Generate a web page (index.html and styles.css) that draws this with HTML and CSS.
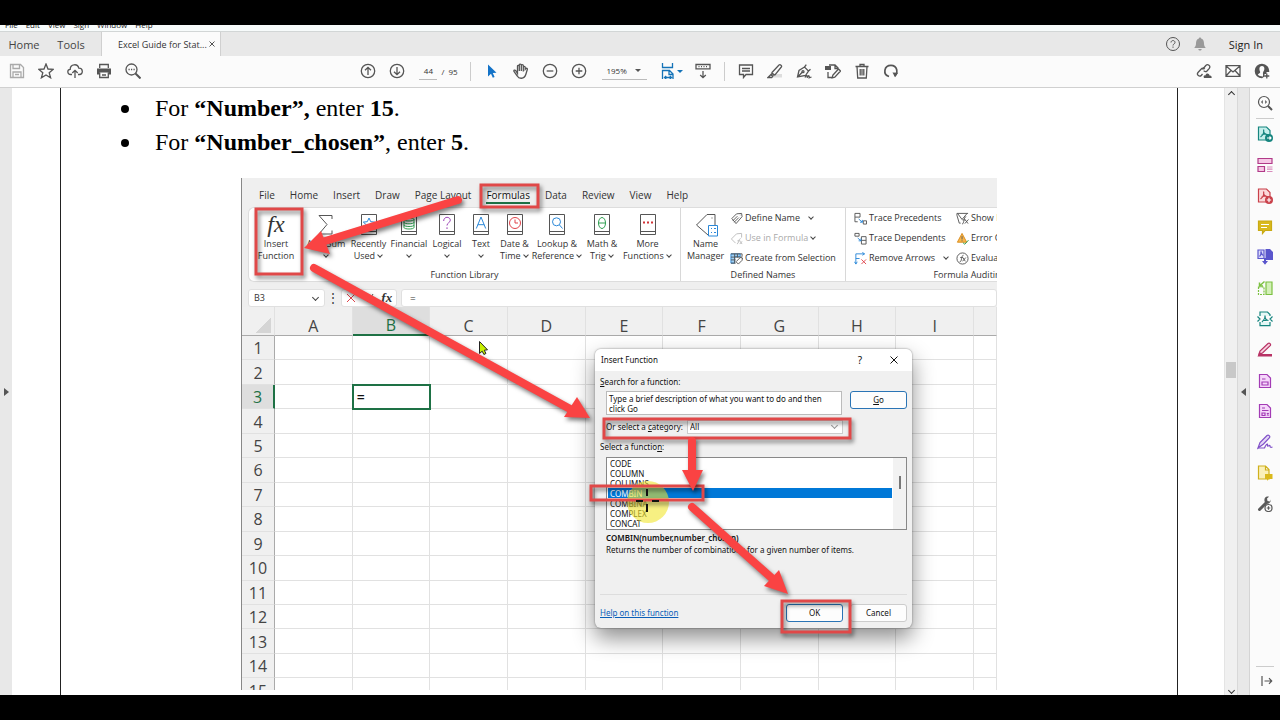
FILE: index.html
```html
<!DOCTYPE html>
<html lang="en">
  <head>
    <meta charset="UTF-8" />
    <meta name="viewport" content="width=device-width, initial-scale=1.0" />
    <title>Excel Guide for Stat...</title>
    <link rel="stylesheet" href="styles.css">
  </head>
  <body>
    <div class="app">
      <nav class="menubar">
        <a href="#">File</a>
        <a href="#">Edit</a>
        <a href="#">View</a>
        <a href="#">Sign</a>
        <a href="#">Window</a>
        <a href="#">Help</a>
      </nav>

      <div class="tabs">
        <button class="tab">Home</button>
        <button class="tab">Tools</button>
        <div class="tab-open">
          <span>Excel Guide for Stat...</span>
          <button class="close" aria-label="Close tab">
            <svg width="6" height="6" viewBox="0 0 6 6"><path d="M.5 .5l5 5M5.500 .5l-5 5" /></svg>
          </button>
        </div>
        <div class="account">
          <button aria-label="Help">
            <svg width="16" height="16" viewBox="0 0 16 16"><circle cx="8" cy="8" r="6.500" /><path d="M6 6.500c0-2.600 4-2.600 4 0 0 1.500-2 1.400-2 3M8 10.500v1.300" /></svg>
          </button>
          <button aria-label="Notifications">
            <svg width="16" height="16" viewBox="0 0 16 16"><path class="bell" d="M8 1.500c.8 0 1.100.5 1.100 1.100C11.500 3.300 12 5.500 12 7.500c0 2 .6 3 1.800 4.500H2.200C3.400 10.500 4 9.500 4 7.500c0-2 .5-4.200 2.900-4.900 0-.6.300-1.100 1.100-1.100zM6.300 13h3.400c-.2 2-3.200 2-3.400 0z" /></svg>
          </button>
          <button class="signin">Sign In</button>
        </div>
      </div>

      <div class="toolbar">
        <div class="tools tools-left">
          <button class="tool pale" aria-label="Save"><svg viewBox="0 0 16 16"><path d="M1.500 1.500h10l3 3v10h-13zM4 1.500v4h6.500v-4M4 14.500V9h8v5.500M6 11.500h4" /></svg></button>
          <button class="tool" aria-label="Star"><svg viewBox="0 0 16 16"><path d="M8 1l2 5 5.300.3-4.100 3.400 1.400 5.100L8 12l-4.600 2.800 1.400-5.100L.7 6.300 6 6z" /></svg></button>
          <button class="tool" aria-label="Upload"><svg viewBox="0 0 16 16"><path d="M5 11.500H3.700C0 11.500-.1 6.500 3.200 6.300 3.200.8 10.800.2 11.800 5.200c4.500-.2 4.600 6.300.7 6.300H11M8 15V7.500M5.300 10L8 7.300l2.700 2.700" /></svg></button>
          <button class="tool" aria-label="Print"><svg viewBox="0 0 16 16"><path d="M3.700 5V1.500h8.600V5M3.700 9.500v5h8.600v-5M6 12h4" /><path class="solid" d="M1 5.500h14v6h-2.500v-2h-9v2H1z" /></svg></button>
          <button class="tool" aria-label="Find text"><svg viewBox="0 0 16 16"><circle cx="6.500" cy="6.500" r="5.500" /><path d="M10.500 10.500l5 5" stroke-width="2" /><path d="M3.500 6.500h1.200M6 6.500h1.200M8.500 6.500h1.200" /></svg></button>
        </div>

        <div class="tools">
          <button class="tool" aria-label="Previous page"><svg viewBox="0 0 16 16"><circle cx="8" cy="8" r="6.700" /><path d="M8 12V4.500M5 7.300l3-3 3 3" /></svg></button>
          <button class="tool" aria-label="Next page"><svg viewBox="0 0 16 16"><circle cx="8" cy="8" r="6.700" /><path d="M8 4v7.500M5 8.700l3 3 3-3" /></svg></button>
          <input class="page-no" aria-label="Page" value="44">
          <span class="page-total">/&nbsp; 95</span>
          <span class="divider"></span>
          <button class="tool blue" aria-label="Select"><svg viewBox="0 0 16 16"><path class="solid" d="M4 1.500v12l3-2.800 1.800 4 1.800-.8-1.800-3.800 3.700-.3z" /></svg></button>
          <button class="tool" aria-label="Pan"><svg viewBox="0 0 16 16"><path d="M4.500 10.500V3.300c0-1.300 1.800-1.300 1.800 0V8 2c0-1.300 2-1.300 2 0v6-5.500c0-1.300 2-1.300 2 0V8.500 4.300c0-1.200 1.900-1.200 1.900 0v2l.5-.7c.7-.8 1.900-.1 1.600.9l-1.500 5c-1.500 5-7 4.500-8.500 1.500L1 8.500c-.5-1.300.8-1.900 1.600-1z" /></svg></button>
          <button class="tool" aria-label="Zoom out"><svg viewBox="0 0 16 16"><circle cx="8" cy="8" r="6.700" /><path d="M4.700 8h6.600" /></svg></button>
          <button class="tool" aria-label="Zoom in"><svg viewBox="0 0 16 16"><circle cx="8" cy="8" r="6.700" /><path d="M4.700 8h6.600M8 4.700v6.600" /></svg></button>
          <button class="zoom-level"><span>195%</span><i class="caret"></i></button>
          <button class="tool fit blue" aria-label="Fit width"><svg viewBox="0 0 16 16"><path d="M2.500 0v4.500h10V0M2.500 16V7.500h7l3.500 3.500v5M9 7.500v4h4M5 14.500h6M6.200 13L4.500 14.500 6.200 16M9.800 13l1.700 1.500L9.800 16" /></svg><i class="caret"></i></button>
          <button class="tool" aria-label="Scroll mode"><svg viewBox="0 0 16 16"><path d="M1 1.500h14v4.300H1zM3.500 3.700h1M6 3.700h1M8.500 3.700h1M11 3.700h1M8 8v6.500M5.200 12L8 14.700l2.800-2.700" /></svg></button>
          <span class="divider"></span>
          <button class="tool" aria-label="Comment"><svg viewBox="0 0 16 16"><path d="M1.500 2h13v9.500h-6.500L5.500 14.500v-3h-4zM4 5.500h8M4 8h8" /></svg></button>
          <button class="tool" aria-label="Highlight"><svg viewBox="0 0 16 16"><path class="tint" d="M6 11h9v3.500H4z" /><path d="M5 9.500L12 2c1.200-1 3.300.7 2.300 2L8 11.800l-3.300.5zM4.800 10l3 2M1 14.500l3-3 1.700 1.700-1 1.300z" /></svg></button>
          <button class="tool" aria-label="Sign"><svg viewBox="0 0 16 16"><path d="M1.500 14L3 7.500 8.500 4l4 4-3 4.500zM8.500 4l1.800-2.300M12.500 8l2-1.800M1.500 14L6.500 9M9 14.500c2-4 2.500-1 2.200.3 1.500-3.500 2.300-1.800 2 0l2.300-.8" /><circle cx="7" cy="8.700" r="1" /></svg></button>
          <button class="tool" aria-label="Edit PDF"><svg viewBox="0 0 16 16"><path class="solid" d="M0 3h6v4H0z" /><path d="M4 2h6l3.300 3.300M10 2v3.500h3.500M3 9v5.500h4M7.800 12.200L13.500 6l2 2-5.700 6.200-2.600.6z" /></svg></button>
          <button class="tool" aria-label="Delete"><svg viewBox="0 0 16 16"><path d="M1.500 3.500h13M6 3.300V1.500h4v1.800M3 3.500l.7 11.500h8.600L13 3.500M6.200 6v6.500M8 6v6.500M9.800 6v6.500" /></svg></button>
          <button class="tool" aria-label="Rotate"><svg viewBox="0 0 16 16"><path d="M6 13.500C-.5 11.500 1 2.300 8 2.300c6.500 0 7.300 7.700 3.700 10.700" stroke-width="1.700" /><path class="solid" d="M9.500 9.500l5.700.2-3.200 4.500z" /></svg></button>
        </div>

        <div class="tools tools-right">
          <button class="tool" aria-label="Share link"><svg viewBox="0 0 16 16"><path d="M6.500 6.500l3.300-4c2-2 5.200.3 3.500 2.800L11 8c-1 1-2.500.8-3.300-.3M8.800 6c-1-1.200-2.800-1-3.600 0L2 9.500c-1.800 2.300 1.500 5 3.500 2.700l1-1.200" /><path class="solid" d="M8 15c-1.200-2 .5-3 1.500-2.500.5-2.700 3.500-2.500 4 0 2-.2 2.500 1.500 2 2.500z" /></svg></button>
          <button class="tool" aria-label="Mail"><svg viewBox="0 0 16 16"><path d="M1 2.700h14v10.600H1zM1 3l7 6 7-6M1 13l5-5.500M15 13l-5-5.500" /></svg></button>
          <button class="tool" aria-label="Add person"><svg viewBox="0 0 16 16"><path class="solid" fill-rule="evenodd" d="M8 .7a7.300 7.300 0 0 1 7.200 8.300h-2.700v2h-2v2.500L8 15.300A7.300 7.300 0 0 1 8 .7zM8 3C5 3 5 6.500 6 8.500c.4 1 0 1.700-1 2L3.800 11.500C5 13 7 13.500 9 13.400v-2.900c-.5-.5.8-2.500 1.200-3.500C10.700 4.500 10 3 8 3z" /><path d="M12.800 10.500v5M10.300 13h5" /></svg></button>
        </div>
      </div>

      <div class="workspace">
        <button class="gutter" aria-label="Show navigation pane"><i class="tri-right"></i></button>

        <main class="page">
          <div class="sheet-frame">
            <ul class="steps">
              <li>For <b>“Number”,</b> enter <b>15</b>.</li>
              <li>For <b>“Number_chosen”</b>, enter <b>5</b>.</li>
            </ul>

            <div class="excel">
              <nav class="ribbon-tabs">
                <a href="#">File</a>
                <a href="#">Home</a>
                <a href="#">Insert</a>
                <a href="#">Draw</a>
                <a href="#">Page Layout</a>
                <a href="#" class="current">Formulas</a>
                <a href="#">Data</a>
                <a href="#">Review</a>
                <a href="#">View</a>
                <a href="#">Help</a>
              </nav>

              <div class="ribbon">
                <section class="group library">
                  <div class="buttons">
                    <button class="big"><span class="fx">fx</span>Insert<br>Function</button>
                    <button class="big"><svg viewBox="0 0 24 24"><path d="M18 6V2.500H5l8 9L5 21h13v-3.500" /></svg>AutoSum<br><i class="chev"></i></button>
                    <button class="big"><svg viewBox="0 0 24 24"><path d="M4.500 1.500h15v20h-15zM4.500 18.500h15" /><path class="c-blue" d="M12 5l1.700 3.700 4 .4-3 2.700.9 4-3.600-2.100-3.600 2.100.9-4-3-2.700 4-.4z" /></svg>Recently<br>Used <i class="chev"></i></button>
                    <button class="big"><svg viewBox="0 0 24 24"><path d="M4.500 1.500h15v20h-15zM4.500 18.500h15" /><path class="c-green" d="M7 6.500c0-2 10-2 10 0v8c0 2-10 2-10 0zM7 6.500c0 2 10 2 10 0M7 9.300c0 2 10 2 10 0M7 12c0 2 10 2 10 0" /></svg>Financial<br><i class="chev"></i></button>
                    <button class="big"><svg viewBox="0 0 24 24"><path d="M4.500 1.500h15v20h-15zM4.500 18.500h15" /><path class="c-purple" d="M8.700 8c0-5 6.600-4.500 6.600-.8 0 2.500-3.300 2.500-3.300 5.300M12 14.300v1.700" /></svg>Logical<br><i class="chev"></i></button>
                    <button class="big"><svg viewBox="0 0 24 24"><path d="M4.500 1.500h15v20h-15zM4.500 18.500h15" /><path class="c-blue" d="M7.300 15.500L12 4l4.700 11.500M8.800 11.700h6.400" /></svg>Text<br><i class="chev"></i></button>
                    <button class="big"><svg viewBox="0 0 24 24"><path d="M4.500 1.500h15v20h-15zM4.500 18.500h15" /><circle class="c-red" cx="12" cy="10" r="5.500" /><path class="c-red" d="M12 6.500V10h3" /></svg>Date &amp;<br>Time <i class="chev"></i></button>
                    <button class="big"><svg viewBox="0 0 24 24"><path d="M4.500 1.500h15v20h-15zM4.500 18.500h15" /><circle class="c-blue" cx="11.500" cy="8.800" r="4" /><path class="c-blue" d="M14.500 12l3 3.500" /></svg>Lookup &amp;<br>Reference <i class="chev"></i></button>
                    <button class="big"><svg viewBox="0 0 24 24"><path d="M4.500 1.500h15v20h-15zM4.500 18.500h15" /><ellipse class="c-green" cx="12" cy="10" rx="3.500" ry="5.500" /><path class="c-green" d="M8.500 10h7" /></svg>Math &amp;<br>Trig <i class="chev"></i></button>
                    <button class="big"><svg viewBox="0 0 24 24"><path d="M4.500 1.500h15v20h-15zM4.500 18.500h15" /><path class="c-dots" d="M7 9.500h2M11 9.500h2M15 9.500h2" /></svg>More<br>Functions <i class="chev"></i></button>
                  </div>
                  <h2>Function Library</h2>
                </section>

                <section class="group names">
                  <div class="buttons">
                    <button class="big"><svg viewBox="0 0 24 24"><path d="M14 22L2.500 12 13 1.500h8V12M18 4.500v1" /><path class="c-blue" d="M14.500 12.500h9v10.500h-9zM17 15.500h1M20 15.500h2M17 19.500h1M20 19.500h2" /></svg>Name<br>Manager</button>
                    <div class="commands">
                      <button><svg viewBox="0 0 14 14"><path d="M2 7l5-5 5.500-.5L13 5l-6.500 7.500zM3 9.500l5-5M4.500 11l5-5M11 3v.5" /></svg>Define Name<i class="chev wide"></i></button>
                      <button disabled><svg viewBox="0 0 14 14"><path d="M6 12L1.500 7.500 7 2l5.500-.5V6M7.500 13c2 0 1.500-6 4-6M8 9.500h3M10.500 13l2.500-3M11 10l2 3" /></svg>Use in Formula <i class="chev"></i></button>
                      <button><svg viewBox="0 0 14 14"><path class="fill-blue" d="M1 2h10v3H5v7H1z" /><path d="M1 2h12v3M1 12h5M1 5.500h12M1 8.500h5M5 2v10M8 2v4" /><path d="M6.500 10.500L11 6l2.500.5-.5 2.500-4 4z" /></svg>Create from Selection</button>
                    </div>
                  </div>
                  <h2>Defined Names</h2>
                </section>

                <section class="group auditing">
                  <div class="buttons">
                    <div class="commands">
                      <button><svg viewBox="0 0 14 14"><path d="M1 1.500h5.500v4H1zM1 5.500v5h3M10 13h3.500V9.500H10z" /><path class="c-blue" d="M5 7.500l4 3.500M9 8.500V11H6.500" /></svg>Trace Precedents</button>
                      <button><svg viewBox="0 0 14 14"><path d="M1 4.500v-3h4.500v3zM8 5h5v8H8zM8 9h5" /><path class="c-blue" d="M4 6.500l3.500 3M7.500 7v2.500H5" /></svg>Trace Dependents</button>
                      <button><svg viewBox="0 0 14 14"><path class="c-blue" d="M2 13V2h9M2 7h4M9 .5l2.500 1.500L9 3.500M.5 10.500L2 13l1.500-2.500" /><path class="c-red" d="M8 8l5 5M13 8l-5 5" /></svg>Remove Arrows<i class="chev wide"></i></button>
                    </div>
                    <div class="commands">
                      <button><svg viewBox="0 0 14 14"><path d="M5 12H3.500L1 3.500V1.500h12M2 2l4.500 6L12 1.500M6.500 13c2.500 0 1.500-8 4.500-8M7 8.500h3.500M9.500 12.500l4-4.500M10 8.500l3 4" /></svg>Show Formulas</button>
                      <button><svg viewBox="0 0 14 14"><path class="warn" d="M6.500 1.500l5 9.500h-10z" /><path d="M6.500 4.500v3.500M6.500 9v1" /><path class="c-green" d="M7.500 11.500l2 1.700 4-4.500" /></svg>Error Checking</button>
                      <button><svg viewBox="0 0 14 14"><circle cx="7" cy="7" r="6" /><path d="M4 10.500c2.500.5 1.500-7 4-7M4.500 6h3M7 10l3.500-4M7.500 6l2.500 4" /></svg>Evaluate Formula</button>
                    </div>
                  </div>
                  <h2>Formula Auditing</h2>
                </section>
              </div>

              <div class="formula-bar">
                <label class="name-box"><input aria-label="Name box" value="B3"><i class="chev"></i></label>
                <span class="grip">⋮</span>
                <div class="entry">
                  <button aria-label="Cancel"><svg width="10" height="10" viewBox="0 0 10 10"><path class="c-red" d="M1 1l8 8M9 1L1 9" /></svg></button>
                  <button aria-label="Enter"><svg width="10" height="10" viewBox="0 0 10 10"><path d="M1 5l3 4 5-8" /></svg></button>
                  <button class="fx-small" aria-label="Insert function">fx</button>
                </div>
                <input class="formula" aria-label="Formula" value="=">
              </div>

              <div class="grid">
                <table>
                  <colgroup><col class="col-head"><col><col><col><col><col><col><col><col><col><col class="col-tail"></colgroup>
                  <thead>
                    <tr><th class="corner"></th><th>A</th><th class="on">B</th><th>C</th><th>D</th><th>E</th><th>F</th><th>G</th><th>H</th><th>I</th><th></th></tr>
                  </thead>
                  <tbody>
                    <tr><th>1</th><td></td><td></td><td></td><td></td><td></td><td></td><td></td><td></td><td></td><td></td></tr>
                    <tr><th>2</th><td></td><td></td><td></td><td></td><td></td><td></td><td></td><td></td><td></td><td></td></tr>
                    <tr><th class="on">3</th><td></td><td class="selected">=</td><td></td><td></td><td></td><td></td><td></td><td></td><td></td><td></td></tr>
                    <tr><th>4</th><td></td><td></td><td></td><td></td><td></td><td></td><td></td><td></td><td></td><td></td></tr>
                    <tr><th>5</th><td></td><td></td><td></td><td></td><td></td><td></td><td></td><td></td><td></td><td></td></tr>
                    <tr><th>6</th><td></td><td></td><td></td><td></td><td></td><td></td><td></td><td></td><td></td><td></td></tr>
                    <tr><th>7</th><td></td><td></td><td></td><td></td><td></td><td></td><td></td><td></td><td></td><td></td></tr>
                    <tr><th>8</th><td></td><td></td><td></td><td></td><td></td><td></td><td></td><td></td><td></td><td></td></tr>
                    <tr><th>9</th><td></td><td></td><td></td><td></td><td></td><td></td><td></td><td></td><td></td><td></td></tr>
                    <tr><th>10</th><td></td><td></td><td></td><td></td><td></td><td></td><td></td><td></td><td></td><td></td></tr>
                    <tr><th>11</th><td></td><td></td><td></td><td></td><td></td><td></td><td></td><td></td><td></td><td></td></tr>
                    <tr><th>12</th><td></td><td></td><td></td><td></td><td></td><td></td><td></td><td></td><td></td><td></td></tr>
                    <tr><th>13</th><td></td><td></td><td></td><td></td><td></td><td></td><td></td><td></td><td></td><td></td></tr>
                    <tr><th>14</th><td></td><td></td><td></td><td></td><td></td><td></td><td></td><td></td><td></td><td></td></tr>
                    <tr><th>15</th><td></td><td></td><td></td><td></td><td></td><td></td><td></td><td></td><td></td><td></td></tr>
                  </tbody>
                </table>
              </div>

              <div class="dialog" role="dialog" aria-label="Insert Function">
                <div class="dialog-title">
                  <span>Insert Function</span>
                  <button aria-label="Help">?</button>
                  <button aria-label="Close"><svg width="8" height="8" viewBox="0 0 8 8"><path d="M.5 .5l7 7M7.500 .5l-7 7" /></svg></button>
                </div>
                <div class="dialog-body">
                  <label for="search"><u>S</u>earch for a function:</label>
                  <div class="search-row">
                    <textarea id="search">Type a brief description of what you want to do and then click Go</textarea>
                    <button class="btn primary"><u>G</u>o</button>
                  </div>
                  <div class="category-row">
                    <label for="category">Or select a <u>c</u>ategory:</label>
                    <div class="select-wrap">
                      <select id="category"><option>All</option></select>
                      <i class="chev"></i>
                    </div>
                  </div>
                  <label for="functions">Select a functio<u>n</u>:</label>
                  <div class="list-wrap">
                    <select id="functions" size="7">
                      <option>CODE</option>
                      <option>COLUMN</option>
                      <option>COLUMNS</option>
                      <option selected>COMBIN</option>
                      <option>COMBINA</option>
                      <option>COMPLEX</option>
                      <option>CONCAT</option>
                    </select>
                    <span class="list-scroll"></span>
                  </div>
                  <p class="syntax">COMBIN(number,number_chosen)</p>
                  <p class="about">Returns the number of combinations for a given number of items.</p>
                  <div class="dialog-foot">
                    <a href="#">Help on this function</a>
                    <button class="btn primary">OK</button>
                    <button class="btn">Cancel</button>
                  </div>
                </div>
              </div>

              <!-- callouts and pointers drawn over the sheet -->
              <svg class="marks" width="756" height="513" viewBox="241 178 756 513">
                <circle class="halo" cx="648" cy="502" r="21" />
                <g class="boxes">
                  <rect x="256" y="209" width="46" height="65" />
                  <rect x="481" y="185" width="57" height="22" />
                  <rect x="604" y="419" width="246" height="19" />
                  <rect x="591" y="486" width="112" height="14" />
                  <rect x="782" y="601" width="68" height="31" />
                </g>
                <g class="arrows">
                  <path d="M458 200L322 242M314 268L572 410M692 441v32M692 507l82 73" />
                  <polygon points="304,248 321,231 330,254" />
                  <polygon points="590,418 577,397 564,417" />
                  <polygon points="693,491 682,470 703,470" />
                  <polygon points="788,594 779,570 764,586" />
                </g>
                <path class="cross" d="M636 501h7M652 501h7M647 489v7M647 504v8" />
                <path class="cursor" d="M479.500 341.500v12l2.700-2.300 1.700 3.300 2-1-1.600-3.300 3.200-.4z" />
              </svg>
            </div>
          </div>
        </main>

        <div class="scrollbar">
          <i class="arrow-up"></i>
          <span class="track-above"></span>
          <span class="thumb"></span>
          <span class="track-below"></span>
          <i class="arrow-down"></i>
        </div>
        <button class="gutter side" aria-label="Hide tools pane"><i class="tri-left"></i></button>

        <aside class="sidebar">
          <button aria-label="Search"><svg viewBox="0 0 16 16"><g class="gray"><circle cx="7" cy="7" r="5.500" /><path d="M11 11l4 4" stroke-width="2" /><path d="M5.800 5L4 7l1.800 2zM8.200 5L10 7 8.200 9z" class="solid" /></g></svg></button>
          <hr>
          <div class="pane-tools">
            <button aria-label="Export PDF"><svg viewBox="0 0 16 16"><path d="M1.500 1h8l3.500 3.500V14H1.500z" stroke="#16857f" fill="#c5efec" /><path d="M6.500 3.500c1 3-1 6-3 7.500M6.500 5c.5 3 2.500 4 5 3.500M4.500 9c2-1 3-1 5-1" stroke="#16857f" /><circle cx="12" cy="12" r="4" fill="#16857f" /><path d="M10 12h4M12.500 10.500L14 12l-1.500 1.500" stroke="#fff" /></svg></button>
            <button aria-label="Organize pages"><svg viewBox="0 0 16 16"><path d="M1 1.500h14v5H1zM1 9.500h6.500v5H1z" stroke="#b13a88" fill="#f6c8e6" /><path d="M10 10h5.500M10 12.200h5.500M10 14.500h5.500" stroke="#d98bbd" /></svg></button>
            <button aria-label="Create PDF"><svg viewBox="0 0 16 16"><path d="M1.500 1h8l3.500 3.500V14H1.500z" stroke="#c9404a" fill="#fbd9da" /><path d="M6.500 3.500c1 3-1 6-3 7.500M6.500 5c.5 3 2.500 4 5 3.500M4.500 9c2-1 3-1 5-1" stroke="#c9404a" /><circle cx="12" cy="12" r="4" fill="#c9404a" /><path d="M9.800 12h4.400M12 9.800v4.400" stroke="#fff" /></svg></button>
            <button aria-label="Comment"><svg viewBox="0 0 16 16"><path d="M1.500 2h13v9.500H8L5.500 14.500v-3h-4z" fill="#d9b91c" stroke="#c9aa14" /><path d="M4 5.500h8M4 8.500h6" stroke="#fff" /></svg></button>
            <button aria-label="Combine files"><svg viewBox="0 0 16 16"><path d="M1 1h6v8.500H1z" stroke="#5a55cc" fill="#dcdbfa" /><path d="M8.500 0h4.500l3 3v8H8.500zM7 9h2v3h2l-3 3.700L5 12h2z" fill="#5a55cc" /><path d="M2.500 7.500C5 5 3.500 4 4 3c.5 2 1 3 2.500 3.500" stroke="#5a55cc" /></svg></button>
            <button aria-label="Compare"><svg viewBox="0 0 16 16"><path d="M9 2h6v12.500H9z" stroke="#7cc142" fill="#d3f0b8" /><path d="M1.500 7v7.500H7V7z" stroke="#7cc142" stroke-dasharray="2 1" /><path d="M7.500 1.500L3 5.500M2.500 2.500v3.500H6" stroke="#7cc142" stroke-width="1.500" /></svg></button>
            <button aria-label="Compress"><svg viewBox="0 0 16 16"><path d="M3 5V1h7.500L13 3.500V5M3 11v3.700h10V11" stroke="#16857f" fill="#e5f8f6" /><path d="M.5 5.500L3 8 .5 10.500M15.500 5.500L13 8l2.500 2.500M5 11c3-3 3-4 3-6.500 0 3 1 5 3.500 5M6 9.500h3.500" stroke="#16857f" /></svg></button>
            <button aria-label="Edit PDF"><svg viewBox="0 0 16 16"><path d="M2 12l1-3L11 1.500c1.500-1 3.300.8 2.200 2.200L5.500 11z" stroke="#b83265" fill="#f7d0de" /><path d="M.5 14.500l2-4.500 3 2 9.500 0v2.500z" fill="#b83265" /></svg></button>
            <button aria-label="Prepare form"><svg viewBox="0 0 16 16"><path d="M2.500 1.500h7.500l3.500 3.500v9.500h-11zM5 9h6v3H5zM5 6h3.500" stroke="#a33bb5" fill="#f5d7fa" /></svg></button>
            <button aria-label="Rich form"><svg viewBox="0 0 16 16"><path d="M2.500 1.500h7.500l3.500 3.500v9.500h-11z" stroke="#a33bb5" fill="#f5d7fa" /><path d="M5 5h3M5 7.500h6.500M5 10h3v2.500H5zM10 10l1.700 2.500M11.700 10L10 12.500" stroke="#a33bb5" /></svg></button>
            <button aria-label="Fill and sign"><svg viewBox="0 0 16 16"><path d="M1 14l2-5.500L10 1.500c1.500-1 3.500.7 2.500 2.200L6.500 10z" stroke="#8050c8" fill="#e5d8f8" /><path d="M1 14h6.500C8.500 11 11 8.500 10.500 11c-.3 3 2.500-1 2.500 1 0 1.500 1 1.500 2.500 1" stroke="#8050c8" /></svg></button>
            <button aria-label="Send for comments"><svg viewBox="0 0 16 16"><path d="M1.500 1h7l3.500 3.500V14H1.500zM8.500 1v4H12" stroke="#cfb01c" fill="#faf0b8" /><path d="M8 9h7.500v5H11.500l-1.500 2v-2H8z" fill="#dab91c" /></svg></button>
            <button aria-label="More tools"><svg viewBox="0 0 16 16"><path d="M2.500 13.500L9 7" stroke="#5b5b5b" stroke-width="3" stroke-linecap="round" /><path d="M13 5.500L10.500 5l-.5-2.500 2-1.800C8 0 6.500 3 8 6.500c2 2.500 6 1 6-3z" fill="#5b5b5b" /><circle cx="11.500" cy="12" r="3.500" stroke="#5b5b5b" fill="#fff" /><path d="M9.700 12h3.600M11.500 10.200v3.600" stroke="#5b5b5b" /></svg></button>
          </div>
          <hr class="push">
          <button aria-label="Collapse pane"><svg viewBox="0 0 16 16"><path class="gray" d="M5 3v10M7.500 8h7M12 5.200L14.700 8 12 10.800" /></svg></button>
        </aside>
      </div>
    </div>
  </body>
</html>
```

FILE: styles.css
```css
* {
  box-sizing: border-box;
}

body {
  margin: 0;
  background-color: #000;
  font-family: "Open Sans", "Noto Sans", sans-serif;
  color: #333;
}

button,
input,
select,
textarea {
  font: inherit;
  color: inherit;
  background: none;
  border: none;
  border-radius: 0;
  padding: 0;
  margin: 0;
  outline: none;
}

button {
  cursor: pointer;
}

svg {
  display: block;
  flex: none;
  fill: none;
  stroke: #555;
}

.app {
  display: flex;
  flex-direction: column;
  height: 100vh;
  border: solid #000;
  border-width: 25px 0;
  background-color: #fff;
  overflow: hidden;
}

/* menu and tabs */
.menubar {
  display: flex;
  flex: none;
  align-items: flex-end;
  gap: 8px;
  height: 7px;
  padding: 0 5px 1px;
  overflow: hidden;
  background-color: #f7fbfb;
  border-bottom: 1px solid #d2d6d6;
  font-size: 8px;
  line-height: 10px;
}

.menubar a {
  color: #222;
  text-decoration: none;
}

.tabs {
  display: flex;
  flex: none;
  height: 24px;
  background-color: #e8e8e8;
  font-size: 11px;
}

.tab {
  width: 46px;
  margin-left: 1px;
  color: #444;
}

.tab-open {
  display: flex;
  align-items: center;
  justify-content: space-between;
  width: 120px;
  margin-left: 7px;
  padding: 0 5px 0 16px;
  background-color: #fbfbfb;
  border: solid #d0d0d0;
  border-width: 0 1px;
  font-size: 9px;
  white-space: nowrap;
}

.account {
  display: flex;
  align-items: center;
  gap: 11px;
  margin-left: auto;
  padding-right: 17px;
}

.account .bell {
  fill: #999;
  stroke: none;
}

.signin {
  margin-left: 10px;
  color: #222;
}

/* toolbar */
.toolbar {
  display: flex;
  flex: none;
  height: 32px;
  padding: 0 4px 1px 2px;
  background-color: #fbfbfb;
  border-bottom: 1px solid #d0d0d0;
  font-size: 8px;
}

.tools {
  display: flex;
  align-items: center;
}

.tools-left {
  flex: 349;
}

.tools-right {
  flex: 368;
  justify-content: flex-end;
}

.tool {
  display: flex;
  align-items: center;
  justify-content: center;
  width: 29px;
  height: 29px;
}

.tool svg {
  width: 16px;
  height: 16px;
  stroke-width: 1.3;
}

.tool .solid {
  fill: #555;
  stroke: none;
}

.tool .tint {
  fill: #ddd;
  stroke: none;
}

.pale svg {
  stroke: #aaa;
}

.blue svg {
  stroke: #1473b8;
}

.tool.blue .solid {
  fill: #1473c8;
}

.page-no {
  width: 18px;
  margin-left: 8px;
  border-bottom: 1px solid #bbb;
  line-height: 17px;
  text-align: center;
}

.page-total {
  width: 17px;
  margin-left: 4px;
  white-space: nowrap;
}

.divider {
  width: 1px;
  height: 19px;
  margin: 0 6px 0 12px;
  background-color: #ccc;
}

.fit ~ .divider {
  margin-left: 7px;
}

.zoom-level {
  display: flex;
  align-items: center;
  justify-content: space-between;
  width: 45px;
  height: 18px;
  margin: 0 7px 0 9px;
  padding: 0 6px 0 4px;
  border-bottom: 1px solid #bbb;
}

.caret {
  border: solid transparent;
  border-width: 3px 3px 0;
  border-top-color: #555;
}

.blue .caret {
  border-top-color: #1473b8;
}

.fit {
  gap: 1px;
  width: 34px;
}

/* workspace */
.workspace {
  display: flex;
  flex: 1;
  min-height: 0;
}

.gutter {
  display: flex;
  flex: none;
  align-items: center;
  justify-content: center;
  width: 12px;
  background-color: #e8e8e8;
}

.gutter.side {
  border-left: 1px solid #d8d8d8;
}

.tri-right {
  border: solid transparent;
  border-width: 4px 0 4px 5px;
  border-left-color: #555;
}

.tri-left {
  border: solid transparent;
  border-width: 4px 5px 4px 0;
  border-right-color: #555;
}

.page {
  flex: 1;
  min-width: 0;
  padding: 0 46px 0 48px;
  background-color: #fff;
}

.sheet-frame {
  display: flex;
  flex-direction: column;
  height: 100%;
  padding: 3px 60px 5px;
  border: solid #222;
  border-width: 0 1px;
}

.steps {
  margin: 0;
  padding-left: 34px;
  color: #000;
  font-family: "Liberation Serif", serif;
  font-size: 24px;
  line-height: 34px;
}

.steps li {
  display: flow-root list-item;
  list-style: none;
  position: relative;
}

.steps li::before {
  content: "";
  position: absolute;
  left: -34px;
  top: 14px;
  width: 8px;
  height: 8px;
  border-radius: 50%;
  background-color: #000;
}

.scrollbar {
  display: flex;
  flex: none;
  flex-direction: column;
  align-items: center;
  width: 13px;
  padding: 4px 0 2px;
  background-color: #f0f0f0;
  border-left: 1px solid #e4e4e4;
}

.track-above {
  flex: 261;
}

.track-below {
  flex: 306;
}

.thumb {
  width: 10px;
  height: 16px;
  background-color: #c8c8c8;
}

.arrow-up,
.arrow-down {
  width: 5px;
  height: 5px;
  border: solid #333;
  border-width: 1px 0 0 1px;
  transform: rotate(45deg);
}

.arrow-down {
  transform: rotate(225deg);
}

.sidebar {
  display: flex;
  flex: none;
  flex-direction: column;
  align-items: center;
  width: 31px;
  background-color: #fbfbfb;
  border-left: 1px solid #d4d4d4;
}

.sidebar button {
  display: flex;
  flex: none;
  align-items: center;
  justify-content: center;
  width: 30px;
  height: 30px;
}

.sidebar svg {
  width: 16px;
  height: 16px;
  stroke: none;
  stroke-width: 1.2;
}

.sidebar .gray {
  stroke: #555;
}

.sidebar .solid {
  fill: #555;
  stroke: none;
}

.sidebar hr {
  width: 18px;
  margin: 0;
  border: none;
  border-top: 1px solid #ccc;
}

.sidebar .push {
  margin-top: auto;
}

.sidebar > button:last-child {
  height: 28px;
}

.pane-tools {
  display: grid;
  grid-template-rows: repeat(13, 1fr);
  align-items: center;
  height: 400px;
}

/* excel window */
.excel {
  position: relative;
  display: flex;
  flex: 1;
  flex-direction: column;
  width: 756px;
  min-height: 0;
  margin: 19px 0 0 120px;
  background-color: #efefef;
  border-left: 1px solid #888;
  color: #333;
  font-size: 10px;
  line-height: 12px;
}

.excel .ribbon-tabs {
  display: flex;
  gap: 15px;
  height: 29px;
  padding: 11px 17px 0;
}

.ribbon-tabs a {
  height: 15px;
  color: #333;
  text-decoration: none;
}

.ribbon-tabs .current {
  border-bottom: 2px solid #1e7145;
  color: #111;
}

.ribbon {
  display: flex;
  flex: none;
  height: 75px;
  margin-left: 6px;
  overflow: hidden;
  background-color: #fff;
  border: solid #ddd;
  border-width: 1px 0 1px 1px;
  border-radius: 6px 0 0 6px;
}

.group {
  display: flex;
  flex: none;
  flex-direction: column;
  justify-content: space-between;
  border-right: 1px solid #d8d8d8;
}

.group h2 {
  margin: 0;
  font-size: 9px;
  font-weight: 400;
  line-height: 13px;
  text-align: center;
}

.library {
  width: 432px;
}

.library .buttons {
  display: grid;
  grid-template-columns: 54px 46px 39px 42px 34px 34px 33px 52px 38px 53px;
}

.names {
  width: 165px;
}

.auditing {
  width: 248px;
}

.names .buttons,
.auditing .buttons {
  display: flex;
  align-items: flex-start;
}

.big {
  font-size: 9px;
  line-height: 12px;
  white-space: nowrap;
  padding-top: 4px;
}

.big svg,
.fx {
  width: 24px;
  height: 26px;
  margin: 0 auto;
}

.fx {
  display: block;
  color: #333;
  font: italic 24px/24px "Liberation Serif", serif;
}

.names .big {
  width: 49px;
}

.commands button {
  display: flex;
  align-items: center;
  gap: 2px;
  height: 20px;
  font-size: 9px;
  white-space: nowrap;
}

.commands svg {
  width: 13px;
  height: 13px;
}

.commands button:disabled {
  color: #aaa;
}

.commands button:disabled svg {
  stroke: #bbb;
}

.auditing .commands {
  width: 102px;
  padding-left: 8px;
}

.chev {
  display: inline-block;
  width: 4px;
  height: 4px;
  border: solid #444;
  border-width: 0 1px 1px 0;
  margin: 0 1px 2px;
  transform: rotate(45deg);
}

.commands .wide {
  margin-left: 7px;
}

.ribbon .c-blue,
.fill-blue {
  stroke: #2b88d8;
}

.fill-blue {
  fill: #9fd0f5;
}

.ribbon .c-green {
  stroke: #2e9e50;
}

.ribbon .c-purple {
  stroke: #9b3fb5;
}

.excel .c-red {
  stroke: #e0434b;
}

.ribbon .c-dots {
  stroke: #d13438;
  stroke-width: 2;
}

.warn {
  fill: #f8b64c;
  stroke: #d88a1a;
}

.formula-bar {
  display: flex;
  flex: none;
  height: 18px;
  margin: 7px 0 0 6px;
}

.name-box,
.entry,
.formula {
  background-color: #fff;
  border: 1px solid #e0e0e0;
  border-radius: 3px;
}

.name-box {
  display: flex;
  align-items: center;
  width: 77px;
  padding: 0 5px;
}

.name-box input {
  flex: 1;
  min-width: 0;
  font-size: 9px;
}

.name-box .chev,
.select-wrap .chev {
  width: 5px;
  height: 5px;
}

.select-wrap .chev {
  border-color: #999;
}

.grip {
  width: 16px;
  font-size: 12px;
  line-height: 18px;
  text-align: center;
}

.entry {
  display: flex;
  align-items: center;
  justify-content: space-around;
  width: 56px;
  margin-right: 4px;
}

.fx-small {
  font: italic bold 13px/14px "Liberation Serif", serif;
}

.formula {
  flex: 1;
  min-width: 0;
  padding: 0 8px;
}

.grid {
  flex: 1;
  min-height: 0;
  overflow: hidden;
}

table {
  width: 100%;
  height: 396px;
  table-layout: fixed;
  border-collapse: separate;
  border-spacing: 0;
}

thead tr {
  height: 29px;
}

.col-head {
  width: 33px;
}

.col-tail {
  width: 23px;
}

th,
td {
  padding: 0;
  border: solid #e1e1e1;
  border-width: 0 1px 1px 0;
}

th {
  background-color: #f0f0f0;
  color: #444;
  font-size: 16px;
  font-weight: 400;
  line-height: 18px;
}

thead th {
  padding-top: 9px;
  border-bottom-color: #aaa;
}

tbody th {
  padding-top: 1px;
  border-right-color: #aaa;
}

td {
  background-color: #fff;
}

.corner {
  background: linear-gradient(135deg, transparent 50%, #d5d5d5 50%) 13px 10px / 16px 16px no-repeat #f0f0f0;
}

th.on {
  background-color: #dedede;
  color: #1e7145;
}

thead .on {
  border-bottom: 2px solid #1e7145;
}

tbody .on {
  border-right: 2px solid #1e7145;
}

.selected {
  padding-left: 4px;
  outline: 2px solid #1e7145;
  outline-offset: -1px;
  color: #111;
  font-size: 14px;
  font-weight: 600;
}

/* insert function dialog */
.dialog {
  position: absolute;
  left: 353px;
  top: 171px;
  width: 317px;
  height: 279px;
  display: flex;
  flex-direction: column;
  background-color: #f0f0f0;
  border-radius: 6px;
  box-shadow: 0 0 2px #777, 0 10px 22px rgba(0, 0, 0, 0.45);
  color: #111;
  font-family: "Noto Sans", "Open Sans", sans-serif;
  font-size: 8px;
  line-height: 10px;
}

.dialog-title {
  display: flex;
  align-items: center;
  height: 22px;
  padding: 0 6px;
  background-color: #fff;
  border-radius: 6px 6px 0 0;
}

.dialog-title span {
  flex: 1;
}

.dialog-title button {
  width: 24px;
  margin-left: 10px;
  font-size: 10px;
}

.dialog-title svg {
  margin: 0 auto;
  stroke: #111;
}

.dialog-body {
  display: flex;
  flex: 1;
  flex-direction: column;
  padding: 6px 5px;
}

.search-row {
  display: flex;
  gap: 8px;
  margin: 4px 0 4px 6px;
}

.search-row textarea {
  flex: 1;
  height: 24px;
  padding: 2px;
  overflow: hidden;
  resize: none;
  background-color: #fff;
  border: 1px solid #bbb;
}

.btn {
  width: 57px;
  height: 18px;
  background-color: #fdfdfd;
  border: 1px solid #ccc;
  border-radius: 3px;
}

.btn.primary {
  border-color: #2a74b5;
}

.category-row {
  display: flex;
  align-items: center;
  height: 15px;
  margin: 0 64px 8px 6px;
}

.category-row label {
  width: 81px;
  white-space: nowrap;
}

.select-wrap {
  display: flex;
  flex: 1;
  align-items: center;
  height: 14px;
  padding-right: 4px;
  background-color: #fff;
  border: 1px solid #ccc;
}

.select-wrap select {
  flex: 1;
  appearance: none;
  padding-left: 2px;
}

.list-wrap {
  display: flex;
  flex: none;
  height: 73px;
  margin: 5px 0 3px 6px;
  background-color: #fff;
  border: 1px solid #888;
}

.list-wrap select {
  flex: 1;
  padding: 0 1px;
  overflow: hidden;
}

.list-wrap option {
  height: 10px;
  min-height: 0;
  padding: 0 2px;
  line-height: 10px;
}

.list-wrap option:checked {
  background: linear-gradient(#0078d7, #0078d7);
  -webkit-text-fill-color: #fff;
}

.list-scroll {
  width: 13px;
  background: linear-gradient(#777, #777) 6px 18px / 2px 13px no-repeat #f2f2f2;
}

.syntax,
.about {
  margin: 0 0 2px 6px;
}

.syntax {
  font-weight: 600;
}

.dialog-foot {
  display: flex;
  align-items: center;
  gap: 7px;
  margin-top: auto;
  padding-top: 9px;
  border-top: 1px solid #ddd;
}

.dialog-foot a {
  margin-right: auto;
  color: #0a5fb8;
}

/* callouts */
.marks {
  position: absolute;
  left: -1px;
  top: 0;
  pointer-events: none;
}

.boxes rect {
  stroke: #e04848;
  stroke-width: 3;
}

.boxes,
.arrows {
  filter: drop-shadow(2px 3px 2px rgba(0, 0, 0, 0.5));
}

.arrows {
  fill: #fa4343;
  stroke: none;
}

.arrows path {
  fill: none;
  stroke: #fa4343;
  stroke-width: 8;
  stroke-linecap: round;
}

.halo {
  fill: #f2e62e;
  fill-opacity: 0.6;
  stroke: none;
}

.cross {
  stroke: #111;
  stroke-width: 2;
}

.cursor {
  fill: #c8f000;
  stroke: #222;
}
```
